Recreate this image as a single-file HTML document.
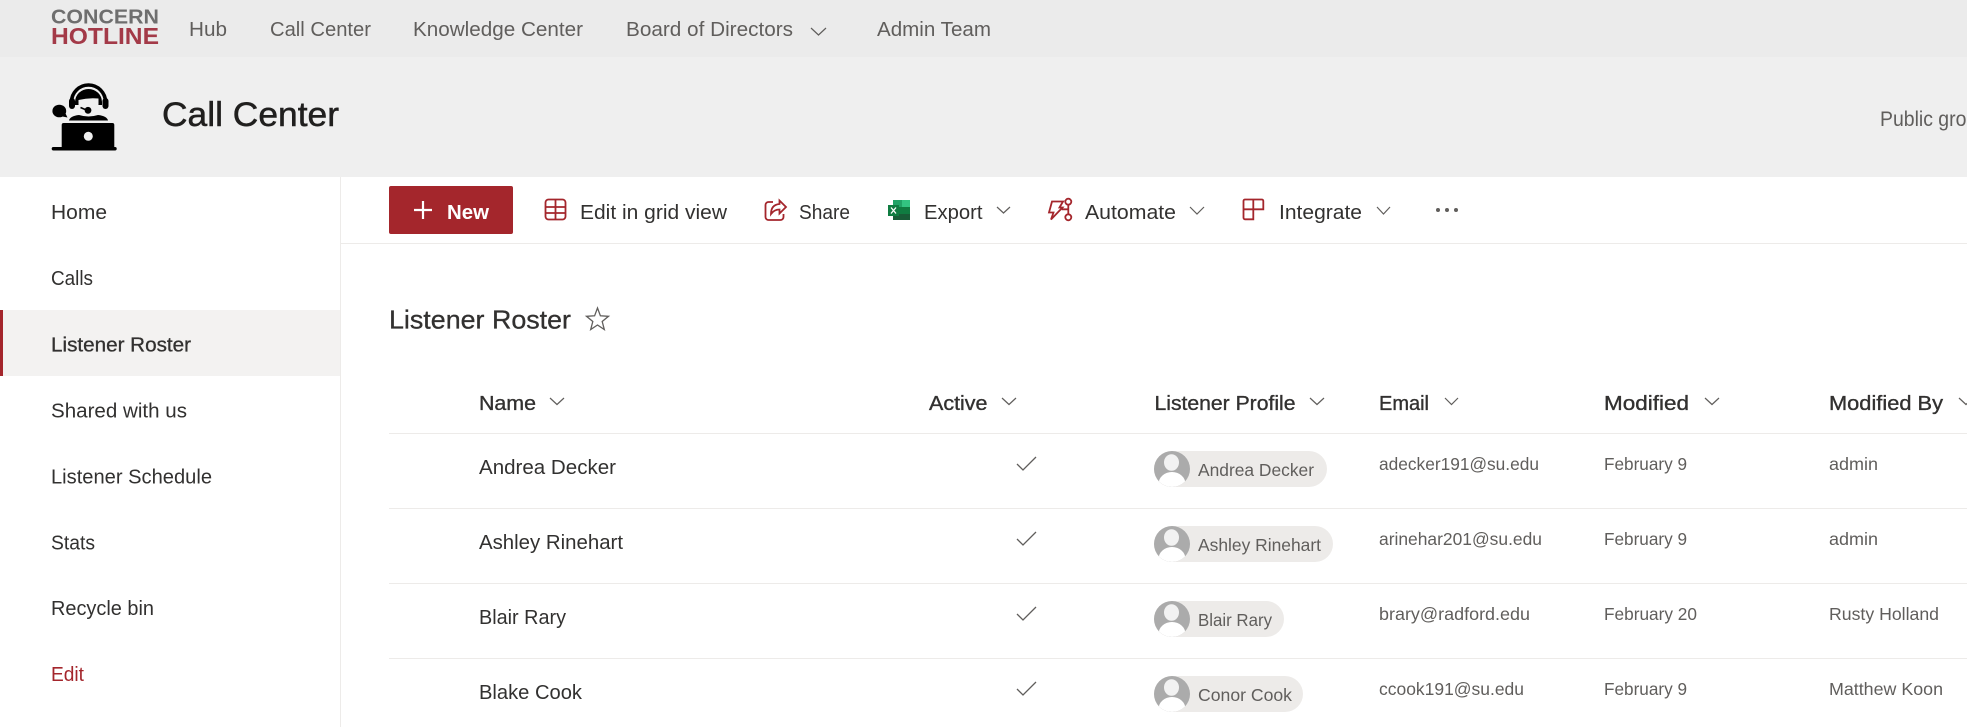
<!DOCTYPE html>
<html><head><meta charset="utf-8"><title>Call Center</title>
<style>
html,body{margin:0;padding:0;background:#fff;overflow:hidden;width:1967px;height:727px}
svg{display:block}
text{font-family:"Liberation Sans",sans-serif;white-space:pre}
.top{font-size:20px;fill:#605e5c}
.nav{font-size:20px;fill:#323130}
.cmd{font-size:20px;fill:#323130}
.hd{font-size:20px;fill:#323130;stroke:#323130;stroke-width:.35}
.nm{font-size:20px;fill:#323130}
.sm{font-size:17.5px;fill:#605e5c}
.chev{fill:none;stroke:#605e5c;stroke-width:1.2}
.ic{fill:none;stroke:#a4262c;stroke-width:1.8}
.chk{fill:none;stroke:#605e5c;stroke-width:1.3}
</style></head><body>
<svg width="1967" height="727" viewBox="0 0 1967 727" xmlns="http://www.w3.org/2000/svg">
<defs>
<clipPath id="av"><circle cx="18" cy="18" r="18"/></clipPath>
<g id="avatar"><g clip-path="url(#av)"><rect width="36" height="36" fill="#ababab"/><ellipse cx="17.5" cy="11.5" rx="7.5" ry="8.3" fill="#f2f2f2"/><ellipse cx="18" cy="33" rx="13.5" ry="12" fill="#fff"/></g></g>
</defs>
<rect width="1967" height="727" fill="#fff"/>
<rect width="1967" height="57" fill="#ebebeb"/>
<rect y="57" width="1967" height="120" fill="#efefef"/>

<!-- logo -->
<text x="51" y="23.5" font-size="20" font-weight="700" fill="#6e6e6e" textLength="108" lengthAdjust="spacingAndGlyphs">CONCERN</text>
<text x="51" y="44" font-size="23.5" font-weight="700" fill="#a33a48" textLength="108" lengthAdjust="spacingAndGlyphs">HOTLINE</text>

<!-- top nav -->
<text class="top" x="189" y="36" textLength="38" lengthAdjust="spacingAndGlyphs">Hub</text>
<text class="top" x="270" y="36" textLength="101" lengthAdjust="spacingAndGlyphs">Call Center</text>
<text class="top" x="413" y="36" textLength="170" lengthAdjust="spacingAndGlyphs">Knowledge Center</text>
<text class="top" x="626" y="36" textLength="167" lengthAdjust="spacingAndGlyphs">Board of Directors</text>
<polyline class="chev" points="811,28 818.5,35 826,28"/>
<text class="top" x="877" y="36" textLength="114" lengthAdjust="spacingAndGlyphs">Admin Team</text>

<!-- site icon -->
<g>
<path d="M75 102a13.5 13 0 0 1 27 0v3H75z" fill="#000"/>
<path d="M71.500 102a17 17 0 0 1 34 0" fill="none" stroke="#000" stroke-width="3.6"/>
<path d="M74.500 101a14 13.500 0 0 1 28 0" fill="none" stroke="#efefef" stroke-width="1.1"/>
<path d="M78.500 100q10-2.500 20-1.500v5.500q0 9-10 9.500t-10-9.500z" fill="#efefef"/>
<rect x="69" y="98" width="6" height="11" rx="3" fill="#000"/>
<rect x="102.500" y="98" width="6" height="11" rx="3" fill="#000"/>
<path d="M80.500 107.500l7 3" stroke="#000" stroke-width="1.6" fill="none"/>
<circle cx="88" cy="110.300" r="3.400" fill="#000"/>
<path d="M69 120.500q1-4.500 10-5.500q9.500 3 19 0q9 1 10 5.500z" fill="#000"/>
<ellipse cx="59.300" cy="111" rx="6.900" ry="6.300" fill="#000"/>
<path d="M60 116l7.500 1.500l-2.500-5z" fill="#000"/>
<path d="M63.700 123h48.600a2 2 0 0 1 2 2v22.500h-52.600V125a2 2 0 0 1 2-2z" fill="#000"/>
<rect x="51.700" y="147" width="65" height="3.500" rx="1.700" fill="#000"/>
<circle cx="88.300" cy="136.300" r="4.500" fill="#efefef"/>
</g>
<text x="162" y="126" font-size="34" fill="#201f1e" stroke="#201f1e" stroke-width=".5" textLength="177" lengthAdjust="spacingAndGlyphs">Call Center</text>
<text x="1880" y="126" font-size="21" fill="#605e5c" textLength="108" lengthAdjust="spacingAndGlyphs">Public group</text>

<!-- sidebar -->
<rect x="340" y="177" width="1" height="550" fill="#edebe9"/>
<rect x="0" y="310" width="340" height="66" fill="#f3f2f1"/>
<rect x="0" y="310" width="3" height="66" fill="#a4262c"/>
<text class="nav" x="51" y="219" textLength="56" lengthAdjust="spacingAndGlyphs">Home</text>
<text class="nav" x="51" y="285" textLength="42" lengthAdjust="spacingAndGlyphs">Calls</text>
<text class="nav" x="51" y="351.5" textLength="140" lengthAdjust="spacingAndGlyphs" stroke="#323130" stroke-width=".3">Listener Roster</text>
<text class="nav" x="51" y="417.5" textLength="136" lengthAdjust="spacingAndGlyphs">Shared with us</text>
<text class="nav" x="51" y="483.5" textLength="161" lengthAdjust="spacingAndGlyphs">Listener Schedule</text>
<text class="nav" x="51" y="549.5" textLength="44" lengthAdjust="spacingAndGlyphs">Stats</text>
<text class="nav" x="51" y="615" textLength="103" lengthAdjust="spacingAndGlyphs">Recycle bin</text>
<text class="nav" x="51" y="681" textLength="33" lengthAdjust="spacingAndGlyphs" style="fill:#a4262c">Edit</text>

<!-- command bar -->
<rect x="341" y="243" width="1626" height="1" fill="#edebe9"/>
<rect x="389" y="186" width="124" height="48" rx="2" fill="#a4262c"/>
<path d="M414 210h18M423 201v18" stroke="#fff" stroke-width="2.2" fill="none"/>
<text x="447" y="219" font-size="20" font-weight="700" fill="#fff" textLength="42" lengthAdjust="spacingAndGlyphs">New</text>

<g class="ic"><rect x="545.500" y="199.500" width="20" height="20" rx="3"/><path d="M545.500 207h20M545.500 213h20M555.500 199.500v20"/></g>
<text class="cmd" x="580" y="219" textLength="147" lengthAdjust="spacingAndGlyphs">Edit in grid view</text>

<g class="ic"><path d="M773 202h-4.500a3 3 0 0 0-3 3v12a3 3 0 0 0 3 3h12a3 3 0 0 0 3-3v-3"/><path d="M786 207l-6.500-6.500v3.500c-5.500.5-8.500 4-8.500 10 2.500-3.500 5-4.500 8.500-4.500v4z"/></g>
<text class="cmd" x="799" y="219" textLength="51" lengthAdjust="spacingAndGlyphs">Share</text>

<g>
<rect x="893" y="200" width="9" height="7" fill="#21a366"/>
<rect x="902" y="200" width="8" height="7" fill="#33c481"/>
<rect x="893" y="207" width="17" height="7" fill="#107c41"/>
<rect x="893" y="214" width="17" height="6" fill="#185c37"/>
<rect x="888" y="205" width="11" height="11" fill="#107c41"/>
<path d="M891 207.500l5 6M896 207.500l-5 6" stroke="#fff" stroke-width="1.3"/>
</g>
<text class="cmd" x="924" y="219" textLength="58.5" lengthAdjust="spacingAndGlyphs">Export</text>
<polyline class="chev" points="997,207 1003.5,213 1010,207"/>

<g class="ic"><path d="M1052 201.500h11l-3.500 6h3L1051 219.500l2.500-7H1049z"/><circle cx="1068.300" cy="201.700" r="3"/><circle cx="1068.300" cy="217.300" r="3"/><path d="M1068.300 204.700v9.600M1061.700 209.300h6.600"/></g>
<text class="cmd" x="1085" y="219" textLength="91" lengthAdjust="spacingAndGlyphs">Automate</text>
<polyline class="chev" points="1190,207 1197,214 1204,207"/>

<g class="ic"><path d="M1253.300 199.500h8.500a1.500 1.500 0 0 1 1.500 1.500v8.300h-10zM1243.500 201a1.500 1.500 0 0 1 1.500-1.500h8.300v19.800h-8.300a1.500 1.500 0 0 1-1.500-1.500zM1243.500 209.300h9.800"/></g>
<text class="cmd" x="1279" y="219" textLength="83" lengthAdjust="spacingAndGlyphs">Integrate</text>
<polyline class="chev" points="1377,207 1383.5,214 1390,207"/>

<g fill="#605e5c"><circle cx="1438" cy="210" r="2"/><circle cx="1447" cy="210" r="2"/><circle cx="1456" cy="210" r="2"/></g>

<!-- list title -->
<text x="389" y="328.5" font-size="26" fill="#323130" stroke="#323130" stroke-width=".3" textLength="182" lengthAdjust="spacingAndGlyphs">Listener Roster</text>
<polygon points="597.5,308 600.4,315.8 608.5,316.3 602.2,321.5 604.3,329.5 597.5,325 590.7,329.5 592.8,321.5 586.5,316.3 594.6,315.8" fill="none" stroke="#605e5c" stroke-width="1.3"/>

<!-- column headers -->
<text class="hd" x="479" y="410" textLength="57" lengthAdjust="spacingAndGlyphs">Name</text>
<polyline class="chev" points="550,398 557,404.5 564,398"/>
<text class="hd" x="929" y="410" textLength="58.5" lengthAdjust="spacingAndGlyphs">Active</text>
<polyline class="chev" points="1002,398 1009,404.5 1016,398"/>
<text class="hd" x="1154.5" y="410" textLength="141" lengthAdjust="spacingAndGlyphs">Listener Profile</text>
<polyline class="chev" points="1310,398 1317,404.5 1324,398"/>
<text class="hd" x="1379" y="410" textLength="50" lengthAdjust="spacingAndGlyphs">Email</text>
<polyline class="chev" points="1445,398 1451.5,404.5 1458,398"/>
<text class="hd" x="1604" y="410" textLength="85" lengthAdjust="spacingAndGlyphs">Modified</text>
<polyline class="chev" points="1705,398 1712,404.5 1719,398"/>
<text class="hd" x="1829" y="410" textLength="114" lengthAdjust="spacingAndGlyphs">Modified By</text>
<polyline class="chev" points="1959,398 1966,404.5 1973,398"/>

<!-- row lines -->
<g fill="#edebe9">
<rect x="389" y="433" width="1578" height="1"/>
<rect x="389" y="508" width="1578" height="1"/>
<rect x="389" y="583" width="1578" height="1"/>
<rect x="389" y="658" width="1578" height="1"/>
</g>

<!-- row 1 -->
<text class="nm" x="479" y="474" textLength="137" lengthAdjust="spacingAndGlyphs">Andrea Decker</text>
<polyline class="chk" points="1017,464 1023,470 1036,457"/>
<rect x="1154" y="451" width="173" height="36" rx="18" fill="#edebe9"/>
<use href="#avatar" x="1154" y="451"/>
<text class="sm" x="1198" y="476" textLength="116" lengthAdjust="spacingAndGlyphs">Andrea Decker</text>
<text class="sm" x="1379" y="470" textLength="160" lengthAdjust="spacingAndGlyphs">adecker191@su.edu</text>
<text class="sm" x="1604" y="470" textLength="83" lengthAdjust="spacingAndGlyphs">February 9</text>
<text class="sm" x="1829" y="470" textLength="49" lengthAdjust="spacingAndGlyphs">admin</text>

<!-- row 2 -->
<text class="nm" x="479" y="549" textLength="144" lengthAdjust="spacingAndGlyphs">Ashley Rinehart</text>
<polyline class="chk" points="1017,539 1023,545 1036,532"/>
<rect x="1154" y="526" width="179" height="36" rx="18" fill="#edebe9"/>
<use href="#avatar" x="1154" y="526"/>
<text class="sm" x="1198" y="551" textLength="123" lengthAdjust="spacingAndGlyphs">Ashley Rinehart</text>
<text class="sm" x="1379" y="545" textLength="163" lengthAdjust="spacingAndGlyphs">arinehar201@su.edu</text>
<text class="sm" x="1604" y="545" textLength="83" lengthAdjust="spacingAndGlyphs">February 9</text>
<text class="sm" x="1829" y="545" textLength="49" lengthAdjust="spacingAndGlyphs">admin</text>

<!-- row 3 -->
<text class="nm" x="479" y="624" textLength="87" lengthAdjust="spacingAndGlyphs">Blair Rary</text>
<polyline class="chk" points="1017,614 1023,620 1036,607"/>
<rect x="1154" y="601" width="130" height="36" rx="18" fill="#edebe9"/>
<use href="#avatar" x="1154" y="601"/>
<text class="sm" x="1198" y="626" textLength="74" lengthAdjust="spacingAndGlyphs">Blair Rary</text>
<text class="sm" x="1379" y="620" textLength="151" lengthAdjust="spacingAndGlyphs">brary@radford.edu</text>
<text class="sm" x="1604" y="620" textLength="93" lengthAdjust="spacingAndGlyphs">February 20</text>
<text class="sm" x="1829" y="620" textLength="110" lengthAdjust="spacingAndGlyphs">Rusty Holland</text>

<!-- row 4 -->
<text class="nm" x="479" y="699" textLength="103" lengthAdjust="spacingAndGlyphs">Blake Cook</text>
<polyline class="chk" points="1017,689 1023,695 1036,682"/>
<rect x="1154" y="676" width="149" height="36" rx="18" fill="#edebe9"/>
<use href="#avatar" x="1154" y="676"/>
<text class="sm" x="1198" y="701" textLength="94" lengthAdjust="spacingAndGlyphs">Conor Cook</text>
<text class="sm" x="1379" y="695" textLength="145" lengthAdjust="spacingAndGlyphs">ccook191@su.edu</text>
<text class="sm" x="1604" y="695" textLength="83" lengthAdjust="spacingAndGlyphs">February 9</text>
<text class="sm" x="1829" y="695" textLength="114" lengthAdjust="spacingAndGlyphs">Matthew Koon</text>
</svg>
</body></html>
